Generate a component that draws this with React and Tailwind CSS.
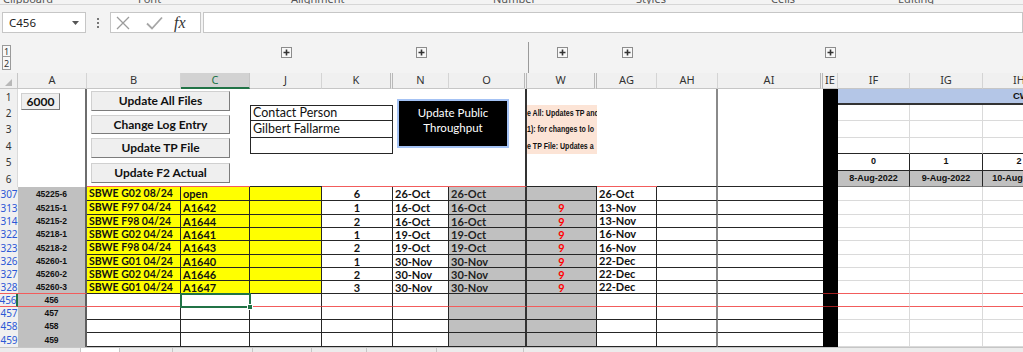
import React from "react";

const GRID =
  "grid grid-cols-[18px_69px_94px_69px_72px_71px_56px_78px_70px_60px_61px_105px_15px_72px_73px_73px] grid-rows-[16px_16px_16px_17px_16px_17px_16px_14px_14px_13px_13px_14px_13px_13px_13px_13px_13px_13px_14px]";

const UI = "font-['Noto_Sans',sans-serif]";
const CAL = "font-['Lato',sans-serif]";
const ARL = "font-['Liberation_Sans',Arial,sans-serif]";

const DATA = [
  ["307", "45225-6", "SBWE G02 08/24", "open", "6", "26-Oct", "26-Oct", "", "26-Oct"],
  ["313", "45215-1", "SBWE F97 04/24", "A1642", "1", "16-Oct", "16-Oct", "9", "13-Nov"],
  ["314", "45215-2", "SBWE F98 04/24", "A1644", "2", "16-Oct", "16-Oct", "9", "13-Nov"],
  ["322", "45218-1", "SBWE G02 04/24", "A1641", "1", "19-Oct", "19-Oct", "9", "16-Nov"],
  ["323", "45218-2", "SBWE F98 04/24", "A1643", "2", "19-Oct", "19-Oct", "9", "16-Nov"],
  ["326", "45260-1", "SBWE G01 04/24", "A1640", "1", "30-Nov", "30-Nov", "9", "22-Dec"],
  ["327", "45260-2", "SBWE G02 04/24", "A1646", "2", "30-Nov", "30-Nov", "9", "22-Dec"],
  ["328", "45260-3", "SBWE G01 04/24", "A1647", "3", "30-Nov", "30-Nov", "9", "22-Dec"],
];

function PlusBox() {
  return (
    <div className="flex h-[11px] w-[11px] items-center justify-center border border-[#8c8c8c] bg-[#f8f8f8]">
      <svg width="7" height="7" viewBox="0 0 7 7">
        <path d="M3.5 0.5V6.5M0.5 3.5H6.5" stroke="#333" strokeWidth="1.6" />
      </svg>
    </div>
  );
}

function TopStrip() {
  const labels = [
    ["Clipboard", "w-[135px]"],
    ["Font", "w-[153px]"],
    ["Alignment", "w-[202px]"],
    ["Number", "w-[143px]"],
    ["Styles", "w-[135px]"],
    ["Cells", "w-[127px]"],
    ["Editing", "w-[120px]"],
  ];
  return (
    <div className="h-[5px] overflow-hidden border-b border-[#d6d6d6] bg-[#f3f3f3]">
      <div className={"-mt-[7px] flex pl-[3px] text-[11px] leading-[11px] text-[#555] " + UI}>
        {labels.map(([t, w]) => (
          <div key={t} className={w}>
            {t}
          </div>
        ))}
      </div>
    </div>
  );
}

function FormulaBar() {
  return (
    <div className="flex h-[31px] items-start bg-[#f3f3f3] pt-[7px]">
      <div className="ml-[2px] flex h-[21px] w-[84px] items-center justify-between border border-[#c6c6c6] bg-white pl-[6px] pr-[6px]">
        <span className={"text-[11.5px] text-[#222] " + UI}>C456</span>
        <svg width="7" height="4" viewBox="0 0 7 4">
          <path d="M0 0H7L3.5 4Z" fill="#555" />
        </svg>
      </div>
      <div className="ml-[10px] flex h-[21px] w-[3px] flex-col items-center justify-center gap-[2px]">
        <div className="h-[2px] w-[2px] bg-[#777]" />
        <div className="h-[2px] w-[2px] bg-[#777]" />
        <div className="h-[2px] w-[2px] bg-[#777]" />
      </div>
      <div className="ml-[11px] flex h-[21px] w-[91px] items-center border border-[#c6c6c6] bg-white">
        <svg className="ml-[5px]" width="14" height="14" viewBox="0 0 14 14">
          <path d="M1 1L13 13M13 1L1 13" stroke="#9c9c9c" strokeWidth="1.3" />
        </svg>
        <svg className="ml-[16px]" width="17" height="14" viewBox="0 0 17 14">
          <path d="M1 7.5L6 12.5L16 1.5" stroke="#a6a6a6" strokeWidth="1.8" fill="none" />
        </svg>
        <span className="ml-[11px] font-['Liberation_Serif',serif] text-[16px] italic leading-none text-[#333]">
          fx
        </span>
      </div>
      <div className="ml-[2px] h-[21px] flex-1 border border-[#c6c6c6] bg-white" />
    </div>
  );
}

function OutlineBar() {
  return (
    <div className="grid h-[37px] grid-cols-[18px_69px_94px_69px_72px_71px_56px_78px_70px_60px_61px_105px_15px_72px_73px_73px] bg-[#f3f3f3]">
      <div className={"flex flex-col pl-[2px] pt-[9px] text-[9px] leading-none text-[#333] " + UI}>
        <div className="flex h-[12px] w-[9px] items-center justify-center border border-[#9a9a9a] bg-[#f8f8f8]">1</div>
        <div className="flex h-[13px] w-[9px] items-center justify-center border border-t-0 border-[#9a9a9a] bg-[#f8f8f8]">2</div>
      </div>
      <div />
      <div />
      <div />
      <div className="flex justify-center pt-[11px]">
        <PlusBox />
      </div>
      <div />
      <div className="flex justify-center pt-[11px]">
        <PlusBox />
      </div>
      <div />
      <div className="relative flex justify-center pt-[11px]">
        <div className="absolute bottom-0 left-[1px] top-[6px] w-[1px] bg-[#9a9a9a]" />
        <PlusBox />
      </div>
      <div className="flex justify-center pt-[11px]">
        <PlusBox />
      </div>
      <div />
      <div />
      <div className="flex justify-center pt-[11px]">
        <PlusBox />
      </div>
      <div />
      <div />
      <div />
    </div>
  );
}

function HeaderRow() {
  const base =
    "flex items-center justify-center bg-[#f0f0f0] border-b border-r border-b-[#c6c6c6] text-[11px] text-[#333] " + UI;
  const single = base + " border-r-[#d4d4d4]";
  const dbl = base + " border-r-[3px] border-double border-r-[#b8b8b8]";
  const cols = [
    ["A", single],
    ["B", single],
    [
      "C",
      "flex items-center justify-center bg-[#d2d2d2] border-r border-r-[#c6c6c6] border-b-2 border-b-[#217346] text-[11px] text-[#217346] " +
        UI,
    ],
    ["J", single],
    ["K", dbl],
    ["N", single],
    ["O", dbl],
    ["W", dbl],
    ["AG", single],
    ["AH", single],
    ["AI", dbl],
    ["IE", single],
    ["IF", single],
    ["IG", single],
    ["IH", single],
  ];
  return (
    <>
      <div className="flex items-end justify-end border-b border-r border-[#c6c6c6] bg-[#f0f0f0] pb-[2px] pr-[5px]">
        <svg width="7" height="7" viewBox="0 0 7 7">
          <path d="M7 0V7H0Z" fill="#b8b8b8" />
        </svg>
      </div>
      {cols.map(([l, c]) => (
        <div key={l} className={c}>
          {l}
        </div>
      ))}
    </>
  );
}

function TopRow({ r }) {
  const six = r === 6;
  const box = r >= 2 && r <= 4;
  const redB = " border-b border-b-[#f25c5c]";
  const blkB = " border-b border-b-[#262626]";
  const notes = { 2: "e All: Updates TP and", 3: "1): for changes to lo", 4: "e TP File: Updates a" };
  const contact = { 2: "Contact Person", 3: "Gilbert Fallarme", 4: "" };
  const dates = ["8-Aug-2022", "9-Aug-2022", "10-Aug-2022"];

  const ifCell = (i) => {
    if (r === 1)
      return (
        <div
          key={i}
          className={
            "flex items-center bg-[#b4c6e7] border-b-2 border-b-[#333] pl-[30px] text-[9.5px] font-bold text-[#111] " + ARL
          }
        >
          {i === 2 ? "CW" : ""}
        </div>
      );
    if (r === 2 || r === 3) return <div key={i} className="border-b border-r border-[#dadada]" />;
    if (r === 4) return <div key={i} className="border-b border-r border-r-[#dadada] border-b-[#262626]" />;
    if (r === 5)
      return (
        <div
          key={i}
          className={"flex items-center justify-center border-b border-r border-[#262626] text-[9px] font-bold text-[#111] " + ARL}
        >
          {i}
        </div>
      );
    return (
      <div
        key={i}
        className={
          "flex items-center justify-center whitespace-nowrap bg-[#c0c0c0] border-b border-r border-r-[#262626] border-b-[#7a7a7a] text-[9px] font-bold text-[#111] " +
          ARL
        }
      >
        {dates[i]}
      </div>
    );
  };

  return (
    <>
      <div className={"flex items-center justify-center bg-[#f0f0f0] border-r border-r-[#dadada] text-[10px] text-[#333] " + UI}>
        {r}
      </div>
      <div className="border-r-2 border-r-[#6e6e6e]" />
      <div className={six ? redB : ""} />
      <div className={six ? redB : ""} />
      {box ? (
        <div
          className={
            "flex items-center whitespace-nowrap border-b border-l border-[#262626] pl-[2px] text-[12.5px] leading-none text-[#111] " +
            CAL +
            (r === 2 ? " border-t" : "")
          }
        >
          {contact[r]}
        </div>
      ) : (
        <div className={six ? blkB : ""} />
      )}
      {box ? (
        <div className={"border-b border-r border-[#262626]" + (r === 2 ? " border-t" : "")} />
      ) : (
        <div className={six ? redB : ""} />
      )}
      <div className={six ? redB : ""} />
      <div className={"border-r-2 border-r-[#333]" + (six ? redB : "")} />
      {box ? (
        <div className="flex items-center overflow-hidden bg-[#fce4d6] pr-[1px]">
          <span
            className={
              "origin-left scale-x-[0.78] whitespace-nowrap text-[9px] font-bold leading-none text-[#111] " + ARL
            }
          >
            {notes[r]}
          </span>
        </div>
      ) : (
        <div className={six ? blkB : ""} />
      )}
      <div className={six ? redB : ""} />
      <div className={"border-r-2 border-r-[#8a8a8a]" + (six ? blkB : "")} />
      <div className={six ? blkB : ""} />
      <div className="bg-black" />
      {[0, 1, 2].map(ifCell)}
    </>
  );
}

function DataRow({ rn, a, b = "", c = "", k = "", n = "", o = "", w = "", ag = "", yellow = false, kind = "" }) {
  const sel = kind === "sel";
  const last = kind === "last";
  const bot = sel ? " border-b border-b-[#f25c5c]" : " border-b border-b-[#262626]";
  const outerBot = sel || last ? " border-b border-b-[#f25c5c]" : "";
  const fill = yellow ? "bg-[#ffff00]" : "bg-white";
  const txt = " flex whitespace-nowrap font-bold leading-none " + CAL;
  return (
    <>
      <div
        className={
          "flex items-center justify-center bg-[#f0f0f0] text-[10px] text-[#2c58d6] " +
          UI +
          outerBot +
          (sel ? " border-r-2 border-r-[#217346]" : "")
        }
      >
        {rn}
      </div>
      <div
        className={
          "flex items-center justify-center bg-[#c0c0c0] border-r-2 border-r-[#5e5e5e] text-[8.5px] font-bold text-[#111] " +
          ARL +
          outerBot
        }
      >
        {a}
      </div>
      <div className={fill + " items-center border-r border-r-[#262626] pl-[2px] text-[10.5px] text-[#111]" + bot + txt}>
        {b}
      </div>
      <div className={fill + " items-center border-r border-r-[#262626] pl-[2px] text-[11px] text-[#111]" + bot + txt}>
        {c}
      </div>
      <div className={fill + " border-r border-r-[#262626]" + bot} />
      <div className={"bg-white items-center justify-center border-r border-r-[#262626] text-[11px] text-[#111]" + bot + txt}>
        {k}
      </div>
      <div className={"bg-white items-center border-r border-r-[#262626] pl-[2px] text-[11px] text-[#111]" + bot + txt}>
        {n}
      </div>
      <div className={"bg-[#c0c0c0] items-center border-r-2 border-r-[#333] pl-[2px] text-[11px] text-[#222]" + bot + txt}>
        {o}
      </div>
      <div
        className={
          "bg-[#c0c0c0] items-center justify-center border-r border-r-[#262626] text-[11px] text-[#ff0000]" + bot + txt
        }
      >
        {w}
      </div>
      <div className={"bg-white items-end border-r border-r-[#262626] pl-[2px] pb-[1px] text-[11px] text-[#111]" + bot + txt}>
        {ag}
      </div>
      <div className={"bg-white border-r-2 border-r-[#8a8a8a]" + bot} />
      <div className={"bg-white" + bot} />
      <div className={"bg-black" + (sel || last ? " border-b border-b-[#a02020]" : "")} />
      {[0, 1, 2].map((i) => (
        <div
          key={i}
          className={
            "border-b border-r border-r-[#dadada]" + (sel || last ? " border-b-[#f25c5c]" : " border-b-[#dadada]")
          }
        />
      ))}
    </>
  );
}

function Sheet() {
  return (
    <div className="relative h-[274px] overflow-hidden">
      <div className={GRID + " w-[1056px] bg-white"}>
        <HeaderRow />
        {[1, 2, 3, 4, 5, 6].map((r) => (
          <TopRow key={r} r={r} />
        ))}
        {DATA.map((d, i) => (
          <DataRow
            key={d[0]}
            rn={d[0]}
            a={d[1]}
            b={d[2]}
            c={d[3]}
            k={d[4]}
            n={d[5]}
            o={d[6]}
            w={d[7]}
            ag={d[8]}
            yellow
            kind={i === 7 ? "last" : ""}
          />
        ))}
        <DataRow rn="456" a="456" kind="sel" />
        <DataRow rn="457" a="457" />
        <DataRow rn="458" a="458" />
        <DataRow rn="459" a="459" />
      </div>

      {/* floating shapes / buttons */}
      <div
        className={
          "absolute left-[21px] top-[20px] flex h-[17px] w-[39px] items-center justify-center border border-[#d0d0d0] border-b-[#7c7c7c] border-r-[#7c7c7c] bg-[#efefef] text-[12px] font-bold text-[#111] " +
          CAL
        }
      >
        6000
      </div>
      {[
        ["Update All Files", "top-[18px] h-[20px]"],
        ["Change Log Entry", "top-[42px] h-[19px]"],
        ["Update TP File", "top-[65px] h-[20px]"],
        ["Update F2 Actual", "top-[90px] h-[20px]"],
      ].map(([t, pos]) => (
        <div
          key={t}
          className={
            "absolute left-[91px] flex w-[139px] items-center justify-center border border-[#d0d0d0] border-b-[#7c7c7c] border-r-[#7c7c7c] bg-[#efefef] text-[12px] font-bold text-[#111] " +
            CAL +
            " " +
            pos
          }
        >
          {t}
        </div>
      ))}
      <div
        className={
          "absolute left-[397px] top-[26px] flex h-[49px] w-[112px] flex-col items-center border-2 border-[#a4c2f4] bg-black pt-[4px] text-[11.5px] leading-[15px] text-white " +
          CAL
        }
      >
        <span>Update Public</span>
        <span>Throughput</span>
      </div>

      {/* selection */}
      <div className="absolute left-[180px] top-[220px] h-[15px] w-[71px] border-2 border-[#217346]" />
      <div className="absolute left-[247px] top-[231px] h-[6px] w-[6px] border border-white bg-[#217346]" />
    </div>
  );
}

function Tabs() {
  return (
    <div className="flex h-[5px] border-t border-[#c6c6c6] bg-[#ececec]">
      <div className="w-[80px]" />
      <div className="w-[40px] border-x border-[#c6c6c6] bg-white" />
      <div className="w-[53px] border-r border-[#c6c6c6]" />
      <div className="w-[80px] border-r border-[#c6c6c6]" />
      <div className="w-[59px] border-r border-[#c6c6c6]" />
      <div className="w-[55px] border-r border-[#c6c6c6]" />
      <div className="w-[70px] border-r border-[#c6c6c6]" />
      <div className="w-[87px] border-r border-[#c6c6c6]" />
    </div>
  );
}

export default function App() {
  return (
    <div className="h-[352px] w-[1023px] overflow-hidden bg-[#f3f3f3]">
      <TopStrip />
      <FormulaBar />
      <OutlineBar />
      <Sheet />
      <Tabs />
    </div>
  );
}
